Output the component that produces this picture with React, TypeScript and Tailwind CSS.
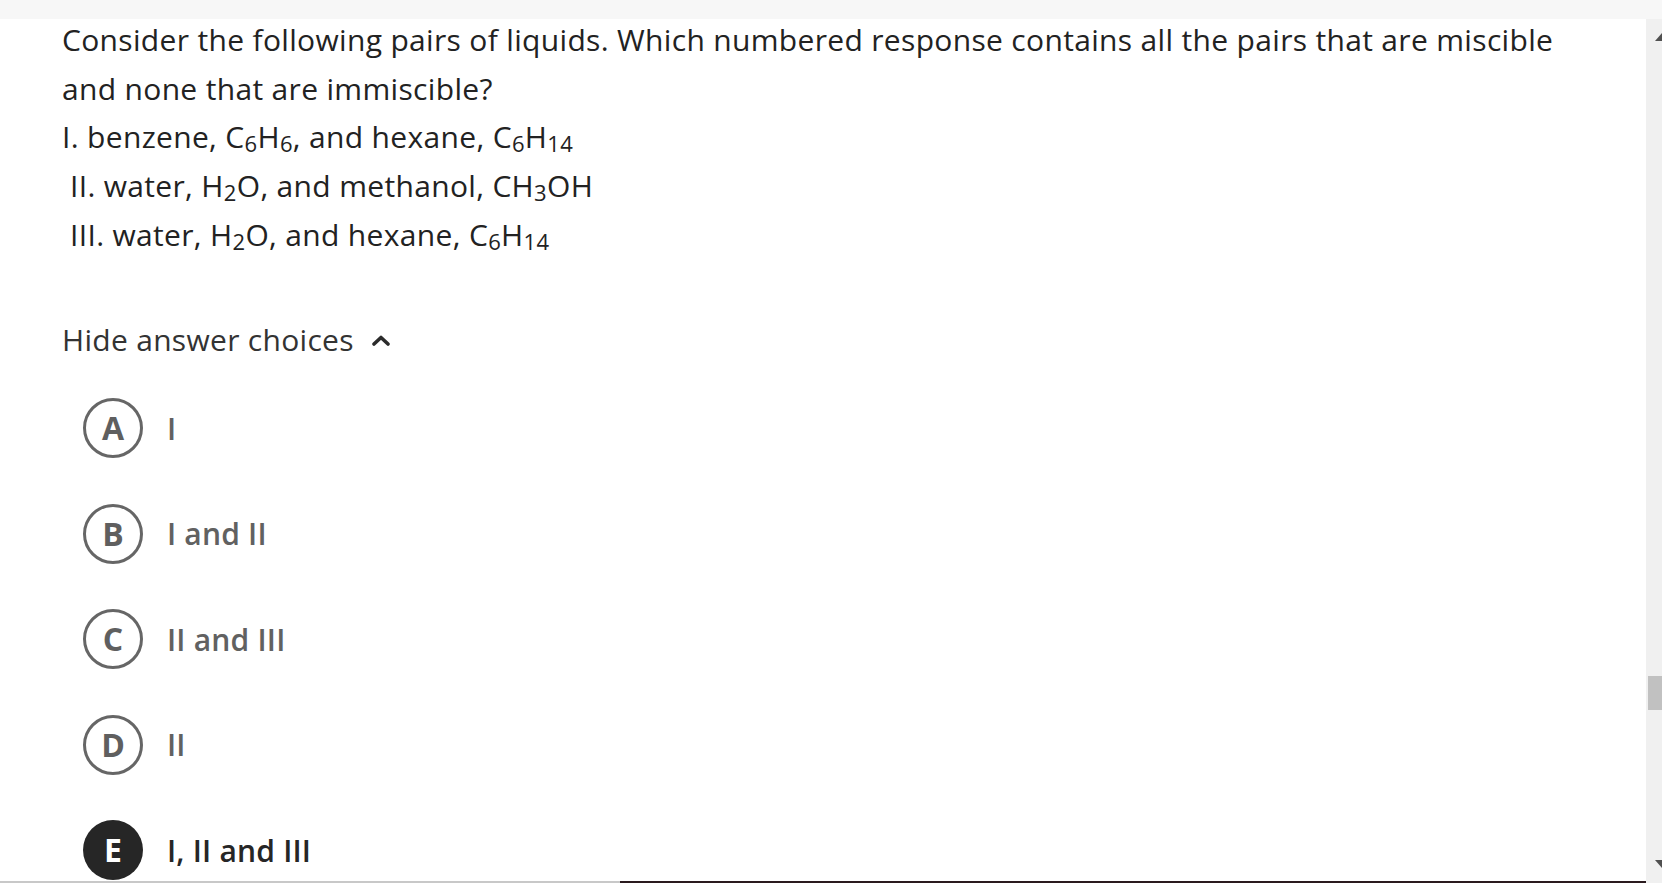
import type React from "react"

const Sub: React.FC<{ children: React.ReactNode }> = ({ children }) => (
  <span className="relative top-[4px] text-[22px] leading-none">{children}</span>
)

const choices = [
  { letter: "A", text: "I", picked: false },
  { letter: "B", text: "I and II", picked: false },
  { letter: "C", text: "II and III", picked: false },
  { letter: "D", text: "II", picked: false },
  { letter: "E", text: "I, II and III", picked: true },
]

const App: React.FC = () => {
  return (
    <div className="h-[883px] w-full flex flex-col overflow-hidden bg-white font-['Open_Sans',sans-serif]">
      <div className="h-[19px] shrink-0 bg-[#f7f7f7]" />

      <div className="flex-1 flex min-h-0">
        {/* page content */}
        <div className="flex-1 min-w-0 overflow-hidden pl-[62px]">
          <div className="-mt-[3px] text-[30px] leading-[48.7px] tracking-[0.33px] text-[#222] whitespace-nowrap">
            <div>Consider the following pairs of liquids. Which numbered response contains all the pairs that are miscible</div>
            <div>and none that are immiscible?</div>
            <div>
              I. benzene, C<Sub>6</Sub>H<Sub>6</Sub>, and hexane, C<Sub>6</Sub>H<Sub>14</Sub>
            </div>
            <div className="pl-[8px]">
              II. water, H<Sub>2</Sub>O, and methanol, CH<Sub>3</Sub>OH
            </div>
            <div className="pl-[8px]">
              III. water, H<Sub>2</Sub>O, and hexane, C<Sub>6</Sub>H<Sub>14</Sub>
            </div>
          </div>

          <div className="mt-[56px] flex items-center text-[30px] leading-[48.7px] tracking-[0.3px] text-[#333]">
            <span>Hide answer choices</span>
            <svg className="ml-[18px] mt-[2px]" width="18" height="11" viewBox="0 0 18 11">
              <polyline points="2,9 9,2.5 16,9" fill="none" stroke="#2b2b2b" strokeWidth="3.6" strokeLinecap="round" strokeLinejoin="round" />
            </svg>
          </div>

          <div className="mt-[34px] ml-[21px] flex flex-col gap-[45.5px]">
            {choices.map((c) => (
              <div key={c.letter} className="h-[60px] flex items-center gap-[24px]">
                <div
                  className={
                    c.picked
                      ? "w-[60px] h-[60px] shrink-0 rounded-full bg-[#262626] flex items-center justify-center text-white text-[32px] font-bold leading-none"
                      : "w-[60px] h-[60px] shrink-0 rounded-full border-[3px] border-[#666] flex items-center justify-center text-[#5f5f5f] text-[32px] font-bold leading-none"
                  }
                >
                  {c.letter}
                </div>
                <span
                  className={
                    c.picked
                      ? "text-[30px] font-semibold tracking-[0.2px] text-[#262626]"
                      : "text-[30px] font-semibold tracking-[0.2px] text-[#616161]"
                  }
                >
                  {c.text}
                </span>
              </div>
            ))}
          </div>
        </div>

        {/* scrollbar */}
        <div className="w-[16px] shrink-0 bg-[#f0f0f0] flex flex-col">
          <svg className="mt-[14px] ml-[9px]" width="7" height="8" viewBox="0 0 7 8">
            <polygon points="0,8 7,0 7,8" fill="#505050" />
          </svg>
          <div className="mt-[635px] ml-[2px] w-[14px] h-[34px] bg-[#c1c1c1]" />
          <svg className="mt-[150px] ml-[9px]" width="7" height="8" viewBox="0 0 7 8">
            <polygon points="0,0 7,0 7,8" fill="#505050" />
          </svg>
        </div>
      </div>

      <div className="h-[2px] shrink-0 flex">
        <div className="w-[620px] bg-[#c8c8c8]" />
        <div className="flex-1 bg-[#2a1a1e]" />
        <div className="w-[16px] bg-[#f0f0f0]" />
      </div>
    </div>
  )
}

export default App
